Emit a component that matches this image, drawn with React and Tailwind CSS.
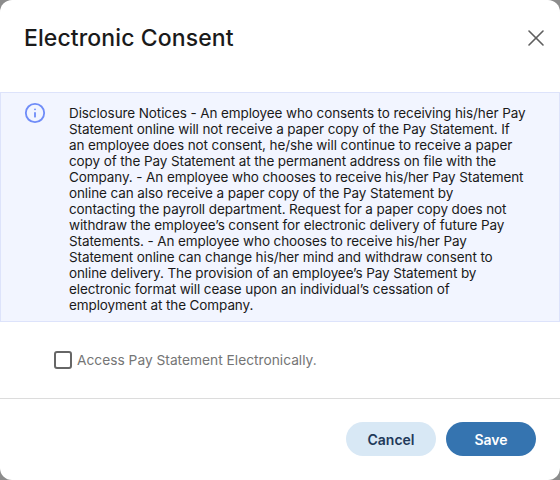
import { X, Info } from 'lucide-react';

// Saltos de línea iguales a la captura
const noticeLines = [
  'Disclosure Notices - An employee who consents to receiving his/her Pay',
  'Statement online will not receive a paper copy of the Pay Statement. If',
  'an employee does not consent, he/she will continue to receive a paper',
  'copy of the Pay Statement at the permanent address on file with the',
  'Company. - An employee who chooses to receive his/her Pay Statement',
  'online can also receive a paper copy of the Pay Statement by',
  'contacting the payroll department. Request for a paper copy does not',
  'withdraw the employee’s consent for electronic delivery of future Pay',
  'Statements. - An employee who chooses to receive his/her Pay',
  'Statement online can change his/her mind and withdraw consent to',
  'online delivery. The provision of an employee’s Pay Statement by',
  'electronic format will cease upon an individual’s cessation of',
  'employment at the Company.',
];

export default function App() {
  return (
    <div className="w-[560px] h-[480px] bg-[#8c8c8c] overflow-hidden font-['Inter',sans-serif]">
      <div className="w-full h-full bg-white rounded-[12px] flex flex-col">
        {/* header */}
        <div className="h-[92px] flex justify-between pl-6 pr-[10px] pt-[23px] shrink-0">
          <h2 className="text-[23px] leading-[30px] font-medium tracking-[0.1px] text-[#1a1a1a]">Electronic Consent</h2>
          <button type="button" className="h-[30px] text-[#5f5f5f]">
            <X size={28} strokeWidth={1.4} />
          </button>
        </div>

        {/* aviso */}
        <div className="h-[230px] shrink-0 flex bg-[#f2f5ff] border border-[#dde3fb] pl-[23px] pr-5 pt-[12px]">
          <Info size={22} strokeWidth={2} className="text-[#6f8cf8] shrink-0 w-[22px] h-[22px] -mt-[3px]" />
          <p className="ml-[23px] text-[13.5px] leading-4 tracking-[-0.1px] text-[#1a1a1a] whitespace-nowrap">
            {noticeLines.map((line) => (
              <span key={line} className="block">{line}</span>
            ))}
          </p>
        </div>

        {/* checkbox */}
        <label className="h-[77px] shrink-0 flex items-center pl-[54px] border-b border-[#dcdcdc]">
          <span className="w-[18px] h-[18px] rounded-[3px] border-2 border-[#666666] bg-white shrink-0"></span>
          <span className="ml-[5px] text-[13.75px] text-[#757575]">Access Pay Statement Electronically.</span>
        </label>

        {/* botones */}
        <div className="flex justify-end gap-[10px] pr-6 pt-[23px]">
          <button type="button" className="w-[90px] h-[34px] rounded-full bg-[#d8e8f5] text-[#1f3a5a] text-[14px] font-semibold">
            Cancel
          </button>
          <button type="button" className="w-[90px] h-[34px] rounded-full bg-[#3574b0] text-white text-[14px] font-semibold">
            Save
          </button>
        </div>
      </div>
    </div>
  );
}
